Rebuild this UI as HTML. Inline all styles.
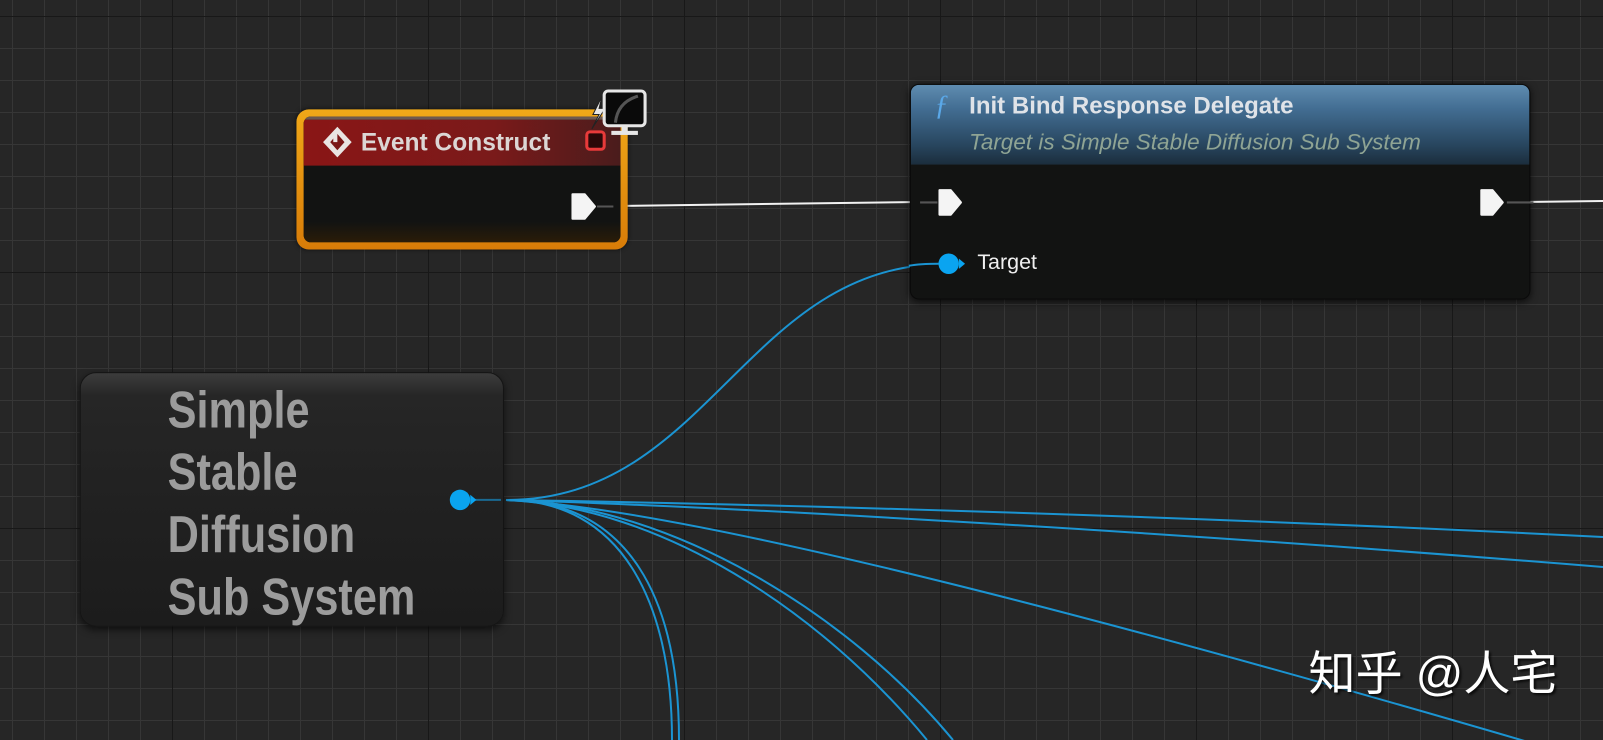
<!DOCTYPE html>
<html><head><meta charset="utf-8"><style>
html,body{margin:0;padding:0;}
body{width:1603px;height:740px;overflow:hidden;position:relative;background-color:#262626;
background-image:
linear-gradient(90deg,#181818 1px,transparent 1px),
linear-gradient(0deg,#181818 1px,transparent 1px),
linear-gradient(90deg,#363636 1px,transparent 1px),
linear-gradient(0deg,#363636 1px,transparent 1px);
background-size:256px 256px,256px 256px,32px 32px,32px 32px;
background-position:172px 0,0 17px,12px 0,0 17px;
font-family:"Liberation Sans",sans-serif;}
.abs{position:absolute;}
svg{position:absolute;left:0;top:0;}
#s{position:absolute;left:0;top:0;width:1568px;height:724px;transform:scale(1.0223);transform-origin:0 0;}
</style></head><body>

<svg width="1603" height="740">
  <g fill="none" stroke="#1b94d2" stroke-width="2">
    <path d="M506,500 C710,500 745,264 947,264"/>
    <path d="M506,500 C710,503 1150,514 1603,537"/>
    <path d="M506,500 C710,506 1150,530 1603,567"/>
    <path d="M506,500 C640,506 950,570 1640,775"/>
    <path d="M506,500 C620,500 672,600 672,740"/>
    <path d="M506,500 C630,500 679,600 679,740"/>
    <path d="M506,500 C660,506 820,610 927,740"/>
    <path d="M506,500 C670,503 850,615 953,740"/>
  </g>
  <path d="M612,206 L920,202" stroke="#f2f2f2" stroke-width="2"/>
  <path d="M1520,202 L1603,201" stroke="#f2f2f2" stroke-width="2"/>
</svg>

<div id="s">
<div class="abs" style="left:78px;top:364px;width:415px;height:249px;border-radius:16px;background:linear-gradient(#3c3c3c 0,#262626 22px,#202020 60%,#1c1c1c 100%);box-shadow:0 3px 8px rgba(0,0,0,.6);border:1px solid #151515;box-sizing:border-box;"></div>
<div class="abs" style="left:164px;top:370px;font-weight:bold;font-size:51px;line-height:61px;color:#9c9c9c;transform:scaleX(0.83);transform-origin:0 0;white-space:nowrap;">Simple<br>Stable<br>Diffusion<br>Sub System</div>

<div class="abs" style="left:290px;top:107px;width:324px;height:137px;border-radius:12px;background:linear-gradient(#f0a818,#d87c08);box-shadow:0 0 4px rgba(0,0,0,.6);"></div>
<div class="abs" style="left:297px;top:114px;width:310px;height:123px;border-radius:7px;background:#121312;overflow:hidden;">
  <div style="height:48px;background:linear-gradient(90deg,#8a1616 0,#7a1a1a 60%,#4a1c1c 100%);border-top:3px solid #6e5a50;box-sizing:border-box;"></div>
  <div style="position:absolute;left:0;right:0;bottom:0;height:20px;background:linear-gradient(transparent,#2a1c08);"></div>
</div>
<div class="abs" style="left:353px;top:126px;font-weight:bold;font-size:24px;color:#dcd6d4;">Event Construct</div>
<svg width="1568" height="724" style="pointer-events:none">
  <polygon points="330,124 344,139 330,154 316,139" fill="#e9e4e2"/>
  <polygon points="330,131 337,139 330,147 323,139" fill="#7a1616"/>
  <rect x="326" y="131" width="4" height="8" fill="#e9e4e2"/>
  <rect x="574" y="129" width="17" height="17" rx="3" fill="#2a0808" stroke="#e83a3a" stroke-width="3"/>
  <polygon points="589,94 580,112 586,112 579,126 592,106 586,106" fill="#e8e8e8" stroke="#222" stroke-width="1"/>
  <rect x="591" y="89" width="40" height="34" rx="4" fill="#0a0a0a" stroke="#e6e6e6" stroke-width="3"/>
  <path d="M602,120 Q604,100 624,94" stroke="#555" stroke-width="3" fill="none"/>
  <rect x="608" y="123" width="6" height="6" fill="#e6e6e6"/>
  <rect x="598" y="128" width="26" height="4" fill="#e6e6e6"/>
</svg>

<div class="abs" style="left:890px;top:82px;width:607px;height:211px;border-radius:9px;background:#121312;box-shadow:0 2px 8px rgba(0,0,0,.7);overflow:hidden;border:1px solid #0a0a0a;box-sizing:border-box;">
  <div style="height:78px;background:linear-gradient(#5f8cb0 0,#426d92 30%,#28465f 75%,#1b2d3c 100%);"></div>
</div>
<div class="abs" style="left:914px;top:88px;font-family:'Liberation Serif',serif;font-style:italic;font-size:28px;color:#5aa8e8;">ƒ</div>
<div class="abs" style="left:948px;top:90px;font-weight:bold;font-size:23.5px;color:#dfe3e8;">Init Bind Response Delegate</div>
<div class="abs" style="left:948px;top:126px;font-style:italic;font-size:22px;color:#8fa494;">Target is Simple Stable Diffusion Sub System</div>
<div class="abs" style="left:956px;top:245px;font-size:21px;color:#f0f0f0;">Target</div>

<svg width="1568" height="724">
  <path d="M584,202 L600,202" stroke="#555" stroke-width="2"/>
  <path d="M900,198 L917,198" stroke="#555" stroke-width="2"/>
  <path d="M1474,198 L1500,198" stroke="#555" stroke-width="2"/>
  <path d="M465,489 L490,489" stroke="#1a6a92" stroke-width="2"/>
  <path d="M889,260 Q900,258 918,258" stroke="#1b94d2" stroke-width="2" fill="none"/>
  <path d="M560,190 L572,190 L582,202 L572,214 L560,214 Z" fill="#f4f4f4" stroke="#f4f4f4" stroke-width="2" stroke-linejoin="round"/>
  <path d="M919,186 L930,186 L940,198 L930,210 L919,210 Z" fill="#f4f4f4" stroke="#f4f4f4" stroke-width="2" stroke-linejoin="round"/>
  <path d="M1449,186 L1460,186 L1470,198 L1460,210 L1449,210 Z" fill="#f4f4f4" stroke="#f4f4f4" stroke-width="2" stroke-linejoin="round"/>
  <circle cx="928" cy="258" r="10" fill="#0aa4f0"/>
  <polygon points="938,253 944,258 938,263" fill="#0aa4f0"/>
  <circle cx="450" cy="489" r="10" fill="#0aa4f0"/>
  <polygon points="460,484 466,489 460,494" fill="#0aa4f0"/>
</svg>

<div class="abs" style="left:1280px;top:623px;font-family:'Liberation Sans','Noto Sans CJK SC',sans-serif;font-size:46px;color:#ffffff;text-shadow:2px 2px 2px rgba(0,0,0,.7);white-space:nowrap;">知乎 @人宅</div>
</div>
</body></html>
